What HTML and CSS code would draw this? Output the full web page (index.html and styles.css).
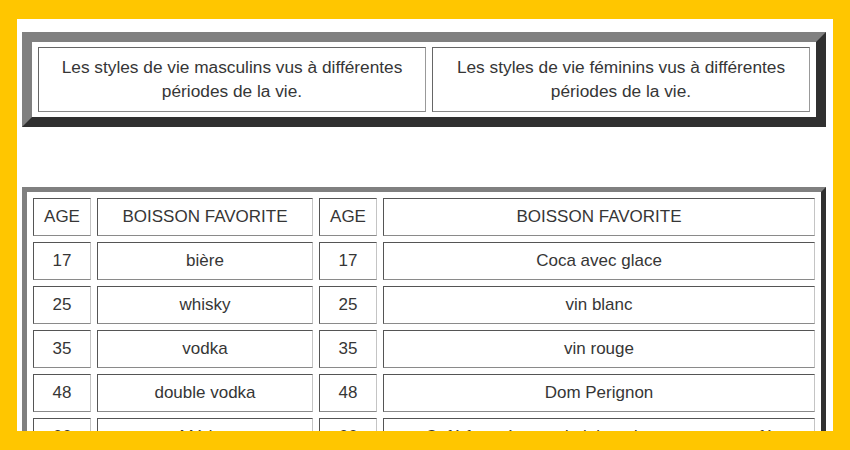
FILE: index.html
```html
<!DOCTYPE html>
<html lang="fr">
<head>
<meta charset="utf-8">
<title>Styles de vie</title>
<link rel="stylesheet" href="styles.css">
</head>
<body>
<div class="frame">
  <div class="page">
    <table class="intro">
      <tr>
        <td class="intro-m">Les styles de vie masculins vus à différentes périodes de la vie.</td>
        <td class="intro-f">Les styles de vie féminins vus à différentes périodes de la vie.</td>
      </tr>
    </table>
    <table class="drinks">
      <tr>
        <td class="c-age">AGE</td>
        <td class="c-m">BOISSON FAVORITE</td>
        <td class="c-age2">AGE</td>
        <td>BOISSON FAVORITE</td>
      </tr>
      <tr><td>17</td><td>bière</td><td>17</td><td>Coca avec glace</td></tr>
      <tr><td>25</td><td>whisky</td><td>25</td><td>vin blanc</td></tr>
      <tr><td>35</td><td>vodka</td><td>35</td><td>vin rouge</td></tr>
      <tr><td>48</td><td>double vodka</td><td>48</td><td>Dom Perignon</td></tr>
      <tr><td>66</td><td>Médoc</td><td>66</td><td>Café frappé avec du lait et du sucre roux, café</td></tr>
    </table>
  </div>
</div>
</body>
</html>
```

FILE: styles.css
```css
html, body {
  margin: 0;
  padding: 0;
}
body {
  font-family: "Liberation Sans", Arial, sans-serif;
  color: #363636;
}
.frame {
  background: #ffc600;
  padding: 19px 17px;
  height: 450px;
  box-sizing: border-box;
}
.page {
  background: #fff;
  height: 412px;
  overflow: hidden;
  padding: 13px 7px 0 5px;
  box-sizing: border-box;
}
table {
  border-collapse: separate;
  width: 804px;
  font-size: 17px;
  line-height: 24px;
}
td {
  text-align: center;
  vertical-align: middle;
}
.intro {
  font-size: 17.3px;
  border-style: solid;
  border-width: 10px;
  border-color: #808080 #303030 #303030 #808080;
  border-spacing: 6px 5px;
}
.intro td {
  border: 1px solid;
  border-color: #666 #999 #888 #666;
  padding: 7px 10px 8px;
}
.intro-m {
  width: 366px;
}
.drinks {
  margin-top: 60px;
  border-style: solid;
  border-width: 5px;
  border-color: #808080 #303030 #303030 #808080;
  border-spacing: 6px 6px;
}
.drinks td {
  border: 1px solid;
  border-color: #555 #c4c4c4 #8a8a8a #555;
  padding: 6px 4px;
  height: 24px;
}
.drinks .c-age,
.drinks .c-age2 {
  width: 48px;
}
.drinks .c-m {
  width: 206px;
}
```
